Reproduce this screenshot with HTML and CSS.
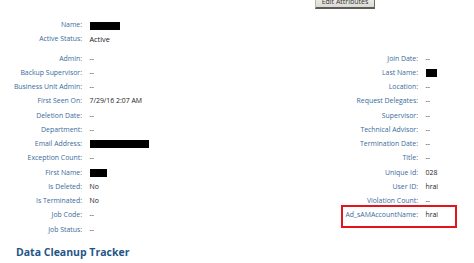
FILE: index.html
```html
<!DOCTYPE html>
<html lang="en">
<head>
    <meta charset="UTF-8">
    <title>User Attributes</title>
    <link rel="stylesheet" href="styles.css">
</head>
<body>
    <div class="toolbar">
        <button class="edit-button">Edit Attributes</button>
    </div>

    <div class="summary">
        <div class="row">
            <span class="label">Name:</span>
            <span class="value"><span class="redact" style="width: 30px;"></span></span>
        </div>
        <div class="row">
            <span class="label">Active Status:</span>
            <span class="value">Active</span>
        </div>
    </div>

    <div class="attributes">
        <div class="column left">
            <div class="row"><span class="label">Admin:</span><span class="value">--</span></div>
            <div class="row"><span class="label">Backup Supervisor:</span><span class="value">--</span></div>
            <div class="row"><span class="label">Business Unit Admin:</span><span class="value">--</span></div>
            <div class="row"><span class="label">First Seen On:</span><span class="value">7/29/16 2:07 AM</span></div>
            <div class="row"><span class="label">Deletion Date:</span><span class="value">--</span></div>
            <div class="row"><span class="label">Department:</span><span class="value">--</span></div>
            <div class="row"><span class="label">Email Address:</span><span class="value"><span class="redact" style="width: 59px;"></span></span></div>
            <div class="row"><span class="label">Exception Count:</span><span class="value">--</span></div>
            <div class="row"><span class="label">First Name:</span><span class="value"><span class="redact" style="width: 17px;"></span></span></div>
            <div class="row"><span class="label">Is Deleted:</span><span class="value">No</span></div>
            <div class="row"><span class="label">Is Terminated:</span><span class="value">No</span></div>
            <div class="row"><span class="label">Job Code:</span><span class="value">--</span></div>
            <div class="row"><span class="label">Job Status:</span><span class="value">--</span></div>
        </div>

        <div class="column right">
            <div class="row"><span class="label">Join Date:</span><span class="value">--</span></div>
            <div class="row"><span class="label">Last Name:</span><span class="value"><span class="redact" style="width: 11px;"></span></span></div>
            <div class="row"><span class="label">Location:</span><span class="value">--</span></div>
            <div class="row"><span class="label">Request Delegates:</span><span class="value">--</span></div>
            <div class="row"><span class="label">Supervisor:</span><span class="value">--</span></div>
            <div class="row"><span class="label">Technical Advisor:</span><span class="value">--</span></div>
            <div class="row"><span class="label">Termination Date:</span><span class="value">--</span></div>
            <div class="row"><span class="label">Title:</span><span class="value">--</span></div>
            <div class="row"><span class="label">Unique Id:</span><span class="value">028</span></div>
            <div class="row"><span class="label">User ID:</span><span class="value">hrai</span></div>
            <div class="row"><span class="label">Violation Count:</span><span class="value">--</span></div>
            <div class="row highlight">
                <span class="label">Ad_sAMAccountName:</span><span class="value">hrai</span>
            </div>
        </div>
    </div>

    <h2>Data Cleanup Tracker</h2>
</body>
</html>
```

FILE: styles.css
```css
body {
    margin: 0;
    font-family: "Open Sans", Arial, sans-serif;
    font-size: 6.9px;
    color: #222;
    background-color: #fff;
    overflow: hidden;
}

/* flex so the button's negative margin doesn't collapse into the page */
.toolbar {
    display: flex;
    height: 11px;
    padding-left: 315px;
}

.edit-button {
    margin-top: -6px;
    width: 60px;
    height: 15px;
    padding: 0;
    font-family: inherit;
    font-size: 7px;
    color: #333;
    background: linear-gradient(#f4f3ef, #dcdad4);
    border: 1px solid #b8b6b0;
    border-right-color: #6f6d68;
    border-bottom: 2px solid #5e5c58;
}

.summary {
    padding-top: 6.5px;
}

.row {
    display: grid;
    height: 14.25px;
    align-items: center;
    column-gap: 7.5px;
}

.summary .row,
.left .row {
    grid-template-columns: 82px 1fr;
}

.label {
    text-align: right;
    color: #3a6b9c;
    white-space: nowrap;
}

.value {
    white-space: nowrap;
    color: #1a1a1a;
}

.summary .value {
    font-size: 7.3px;
}

.redact {
    display: inline-block;
    height: 8px;
    vertical-align: middle;
    background-color: #000;
}

.attributes {
    display: grid;
    grid-template-columns: 240px 1fr;
    margin-top: 5px;
}

.right .row {
    grid-template-columns: 178px 1fr;
}

.highlight {
    position: relative;
}

.highlight::after {
    content: "";
    position: absolute;
    left: 101px;
    top: -3px;
    width: 112px;
    height: 19px;
    border: 2px solid #e3141b;
}

h2 {
    margin: 9px 0 0 16px;
    font-size: 10.5px;
    line-height: 14px;
    font-weight: 700;
    color: #1f5688;
}
```
